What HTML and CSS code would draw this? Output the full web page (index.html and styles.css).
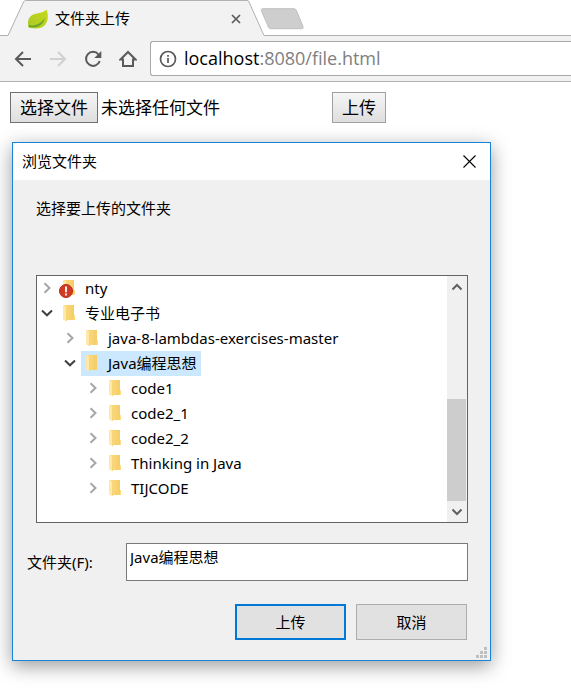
FILE: index.html
```html
<!DOCTYPE html>
<html lang="zh-CN">
<head>
<meta charset="utf-8">
<meta name="viewport" content="width=device-width, initial-scale=1">
<title>文件夹上传</title>
<link rel="stylesheet" href="styles.css">
</head>
<body>
<svg class="sprite" aria-hidden="true">
  <defs>
    <linearGradient id="folder-front" x1="0" x2="1" y1="0" y2="0">
      <stop offset="0" stop-color="#fddb80"/><stop offset="1" stop-color="#f3cb66"/>
    </linearGradient>
    <linearGradient id="leaf-fill" x1="0" x2="1" y1="1" y2="0">
      <stop offset="0" stop-color="#a9c92b"/><stop offset="1" stop-color="#c8d916"/>
    </linearGradient>
    <symbol id="folder" viewBox="-1 -1 13 20">
      <path d="M1 1h10v10l1 1v4H1z" fill="url(#folder-front)"/>
      <path d="M0 1l4 2v14.500L0 15.500z" fill="#ffe9a9"/>
      <path d="M3.500 3v14" stroke="#f6d479" fill="none"/>
      <path d="M11 11l1 1v4h-1.500z" fill="#ffdc7c"/>
    </symbol>
    <symbol id="closed" viewBox="0 0 12 12">
      <path d="M3.500 1.200L8.500 6l-5 4.800" fill="none" stroke="#a6a6a6" stroke-width="2"/>
    </symbol>
    <symbol id="open" viewBox="0 0 12 12">
      <path d="M1 3.500L6 8.300l5-4.800" fill="none" stroke="#404040" stroke-width="2"/>
    </symbol>
  </defs>
</svg>

<header class="browser">
  <div class="tabs">
    <div class="tab">
      <svg class="tab-shape" viewBox="0 0 258 36" width="258" height="36" aria-hidden="true">
        <path d="M0 35.500h1L16.500 2q.7-1.500 2-1.500H240q1.500 0 2 1.500L257 35.500V36H0z" fill="#f2f2f2"/>
        <path d="M0 35.500h1L16.500 2q.7-1.500 2-1.500H240q1.500 0 2 1.500L257 35.500h1" fill="none" stroke="#b0b0b0"/>
      </svg>
      <svg class="leaf" viewBox="0 0 22 20" width="22" height="20" aria-hidden="true">
        <path d="M19.500.5C21.500 5 21.500 12 18 16c-3 3.500-9 4-15 3-1.500-.3-2.500-1.500-1.800-2.500C.5 11 2 7 7 5.200 11 4 16 4 19.500.5z" fill="url(#leaf-fill)"/>
        <path d="M2.500 16.500c6 .8 12-2 15.500-8-1.500 7-7 10.500-14.500 9.700z" fill="#68a329"/>
        <circle cx="3" cy="17.200" r="1.100" fill="#6ea52d"/>
      </svg>
      <span class="tab-title">文件夹上传</span>
      <button class="tab-close" type="button" aria-label="关闭标签页">
        <svg viewBox="0 0 10 10" width="10" height="10"><path d="M1 1l8 8M9 1L1 9" fill="none" stroke="#5a5a5a" stroke-width="1.700"/></svg>
      </button>
    </div>
    <button class="new-tab" type="button" aria-label="新标签页">
      <svg viewBox="0 0 44 22" width="44" height="22"><path d="M3 .7h31q1.600 0 2.300 1.500l6.800 16.500q.6 2-1.500 2H11q-1.800 0-2.500-1.500L1.300 2.500Q.7.700 3 .7z" fill="#cecece" stroke="#c0c0c0"/></svg>
    </button>
  </div>
  <nav class="toolbar">
    <button type="button" aria-label="后退"><svg viewBox="0 0 18 18" width="18" height="18"><path d="M17 9H2.500M9 2L2 9l7 7" fill="none" stroke="#5a5a5a" stroke-width="2"/></svg></button>
    <button type="button" aria-label="前进"><svg viewBox="0 0 18 18" width="18" height="18"><path d="M1 9h14.500M9 2l7 7-7 7" fill="none" stroke="#d0d0d0" stroke-width="2"/></svg></button>
    <button type="button" aria-label="重新加载"><svg viewBox="0 0 18 18" width="18" height="18"><path d="M14.500 4.500A7 7 0 1 0 15.700 11" fill="none" stroke="#5a5a5a" stroke-width="2"/><path d="M17.300 1v7h-7z" fill="#5a5a5a"/></svg></button>
    <button type="button" aria-label="主页"><svg viewBox="0 0 18 18" width="18" height="18"><path d="M1.500 9.500L9 2l7.500 7.500H14v6.500H4V9.500z" fill="none" stroke="#5a5a5a" stroke-width="2"/></svg></button>
    <div class="address">
      <svg viewBox="0 0 18 18" width="18" height="18" aria-hidden="true"><circle cx="9" cy="9" r="7.500" fill="none" stroke="#5a5a5a" stroke-width="1.700"/><path d="M9 8v5M9 5v1.800" stroke="#5a5a5a" stroke-width="1.700"/></svg>
      <span class="url"><span class="host">localhost</span>:8080/file.html</span>
    </div>
  </nav>
</header>

<main>
  <form class="upload">
    <div class="file-picker">
      <button class="native focused" type="button">选择文件</button>
      <span>未选择任何文件</span>
    </div>
    <button class="native" type="button">上传</button>
  </form>

  <section class="dialog" role="dialog" aria-labelledby="dialog-title">
    <header class="title-bar">
      <h1 id="dialog-title">浏览文件夹</h1>
      <button type="button" aria-label="关闭"><svg viewBox="0 0 13 13" width="13" height="13"><path d="M.5.500l12 12M12.500.500l-12 12" fill="none" stroke="#000" stroke-width="1.100"/></svg></button>
    </header>
    <form class="dialog-body">
      <p class="hint">选择要上传的文件夹</p>
      <div class="tree-box">
        <ul class="tree">
          <li>
            <div class="node"><button class="toggle" type="button" aria-label="展开"><svg><use href="#closed"/></svg></button>
              <span class="entry"><span class="icon"><svg class="folder"><use href="#folder"/></svg>
                <svg class="badge" viewBox="0 0 14 14"><circle cx="7" cy="7" r="6.500" fill="#d33a23" stroke="#b52b1c"/><path d="M7 2.500v5.700M7 9.500v2" stroke="#fff" stroke-width="1.800"/></svg></span>nty</span></div>
          </li>
          <li>
            <div class="node"><button class="toggle" type="button" aria-label="折叠"><svg><use href="#open"/></svg></button><span class="entry"><svg class="folder"><use href="#folder"/></svg>专业电子书</span></div>
            <ul>
              <li><div class="node"><button class="toggle" type="button" aria-label="展开"><svg><use href="#closed"/></svg></button><span class="entry"><svg class="folder"><use href="#folder"/></svg>java-8-lambdas-exercises-master</span></div></li>
              <li>
                <div class="node"><button class="toggle" type="button" aria-label="折叠"><svg><use href="#open"/></svg></button><span class="entry selected"><svg class="folder"><use href="#folder"/></svg>Java编程思想</span></div>
                <ul>
                  <li><div class="node"><button class="toggle" type="button" aria-label="展开"><svg><use href="#closed"/></svg></button><span class="entry"><svg class="folder"><use href="#folder"/></svg>code1</span></div></li>
                  <li><div class="node"><button class="toggle" type="button" aria-label="展开"><svg><use href="#closed"/></svg></button><span class="entry"><svg class="folder"><use href="#folder"/></svg>code2_1</span></div></li>
                  <li><div class="node"><button class="toggle" type="button" aria-label="展开"><svg><use href="#closed"/></svg></button><span class="entry"><svg class="folder"><use href="#folder"/></svg>code2_2</span></div></li>
                  <li><div class="node"><button class="toggle" type="button" aria-label="展开"><svg><use href="#closed"/></svg></button><span class="entry"><svg class="folder"><use href="#folder"/></svg>Thinking in Java</span></div></li>
                  <li><div class="node"><button class="toggle" type="button" aria-label="展开"><svg><use href="#closed"/></svg></button><span class="entry"><svg class="folder"><use href="#folder"/></svg>TIJCODE</span></div></li>
                </ul>
              </li>
            </ul>
          </li>
        </ul>
        <div class="scrollbar">
          <button type="button" aria-label="向上滚动"><svg viewBox="0 0 10 8" width="10" height="8"><path d="M.5 6.500L5 2l4.500 4.500" fill="none" stroke="#606060" stroke-width="2"/></svg></button>
          <div class="track"><div class="thumb"></div></div>
          <button type="button" aria-label="向下滚动"><svg viewBox="0 0 10 8" width="10" height="8"><path d="M.5 1.500L5 6l4.500-4.500" fill="none" stroke="#606060" stroke-width="2"/></svg></button>
        </div>
      </div>
      <div class="field">
        <label for="folder-name">文件夹(F):</label>
        <input id="folder-name" type="text" value="Java编程思想">
      </div>
      <div class="actions">
        <button class="primary" type="button">上传</button>
        <button type="button">取消</button>
      </div>
    </form>
    <svg class="grip" viewBox="0 0 11 11" width="11" height="11" aria-hidden="true"><path d="M8 0h3v3H8zM4 4h3v3H4zM8 4h3v3H8zM0 8h3v3H0zM4 8h3v3H4zM8 8h3v3H8z" fill="#bfbfbf"/></svg>
  </section>
</main>
</body>
</html>
```
FILE: styles.css
```css
* { box-sizing: border-box; }

body {
  margin: 0;
  background: #fff;
  color: #000;
  font: 15px/24px "Open Sans", "Noto Sans CJK SC", sans-serif;
}

button, input { font: inherit; color: inherit; }

button {
  display: flex;
  align-items: center;
  justify-content: center;
  padding: 0;
  border: 0;
  background: none;
}

svg { display: block; flex: none; }
.sprite { position: absolute; width: 0; height: 0; }

/* Browser frame */
.browser { border-bottom: 1px solid #b0b0b0; background: #f2f2f2; }

.tabs {
  display: flex;
  height: 36px;
  padding-left: 7px;
  background: linear-gradient(#b0b0b0, #b0b0b0) bottom / 100% 1px no-repeat #fff;
}

.tab {
  position: relative;
  display: flex;
  align-items: center;
  width: 258px;
  padding: 2px 24px 0 20px;
}

.tab-shape { position: absolute; left: 0; top: 0; }
.leaf, .tab-title, .tab-close { position: relative; }
.tab-title { flex: 1; margin-left: 6px; padding-bottom: 2px; }
.new-tab { align-self: flex-start; margin: 8px 0 0 -5px; position: relative; }

.toolbar {
  display: flex;
  align-items: center;
  gap: 17px;
  padding: 5px 0 5px 14px;
}

.address {
  display: flex;
  flex: 1;
  align-items: center;
  gap: 7px;
  height: 35px;
  margin-left: -4px;
  padding: 0 0 2px 8px;
  border: 1px solid #a8a8a8;
  border-right: 0;
  border-radius: 3px 0 0 3px;
  background: #fff;
}

.address svg { margin-top: 2px; }
.url { color: #808080; font-size: 18px; }
.host { color: #000; }

/* Page */
.upload {
  display: flex;
  padding: 10px;
  font-size: 17px;
}

.file-picker {
  display: flex;
  align-items: center;
  gap: 3px;
  width: 322px;
}

.native {
  height: 31px;
  padding: 0 9px;
  border: 1px solid #a0a0a0;
  background: linear-gradient(#f6f6f6, #dedede);
}

.focused { border-color: #707070; }

/* Dialog */
.dialog {
  position: relative;
  margin: 9px 80px 35px 12px;
  border: 1px solid #1883d7;
  background: #f0f0f0;
  box-shadow: 0 5px 18px rgba(0, 0, 0, .4);
  font-family: "Noto Sans", "Noto Sans CJK SC", sans-serif;
}

.title-bar {
  display: flex;
  align-items: center;
  justify-content: space-between;
  height: 37px;
  padding: 0 14px 1px 9px;
  background: #fff;
}

.title-bar h1 { margin: 0; font-size: 15px; font-weight: 400; }
.dialog-body { padding: 16px 22px 20px 14px; }
.hint { margin: 0 0 55px 9px; }

.tree-box {
  display: flex;
  margin-left: 9px;
  border: 1px solid #646464;
  background: #fff;
}

.tree, .tree ul { margin: 0; padding: 0; list-style: none; }
.tree { flex: 1; padding-bottom: 21px; }
.tree ul { padding-left: 23px; }
.node { display: flex; height: 25px; }
.toggle { width: 21px; padding: 0 2px 1px 0; }
.toggle svg { width: 12px; height: 12px; }

.entry {
  display: flex;
  align-items: center;
  gap: 10px;
  padding: 0 4px 2px;
  white-space: nowrap;
}

.selected { background: #cce8ff; }
.folder { width: 13px; height: 20px; }
.icon { position: relative; }
.badge { position: absolute; left: -3px; top: 6px; width: 14px; height: 14px; }

.scrollbar {
  display: flex;
  flex-direction: column;
  width: 20px;
  background: #f0f0f0;
}

.scrollbar button { height: 21px; padding-right: 1px; }
.track { display: flex; flex: 1; flex-direction: column; justify-content: flex-end; }
.thumb { height: 50%; margin-right: 1px; background: #cdcdcd; }

.field { display: flex; align-items: center; margin-top: 20px; }
.field label { width: 99px; }

.field input {
  flex: 1;
  min-width: 0;
  height: 38px;
  padding: 0 3px 12px;
  border: 1px solid #7a7a7a;
  background: #fff;
}

.actions {
  display: flex;
  justify-content: flex-end;
  gap: 10px;
  margin: 23px 1px 0 0;
}

.actions button {
  width: 111px;
  height: 36px;
  border: 1px solid #adadad;
  background: #e1e1e1;
}

.actions .primary { border: 2px solid #0078d7; }
.grip { position: absolute; right: 3px; bottom: 2px; }
```
